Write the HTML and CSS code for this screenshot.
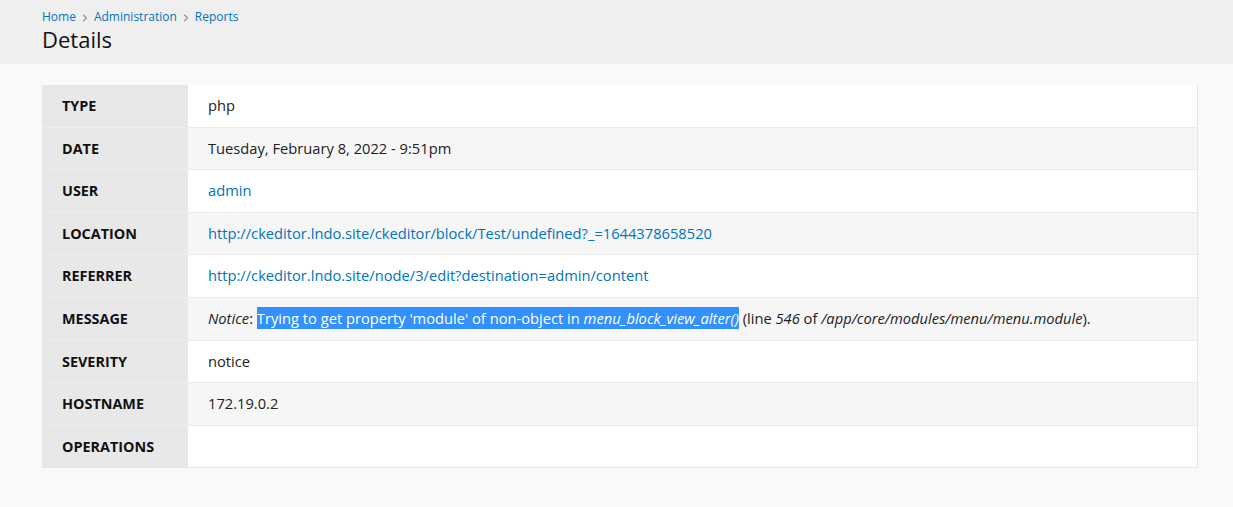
FILE: index.html
```html
<!DOCTYPE html>
<html lang="en">
<head>
<meta charset="utf-8">
<title>Details</title>
<link rel="stylesheet" href="styles.css">
</head>
<body>
<header class="page-header">
  <nav class="breadcrumb">
    <a href="#">Home</a>
    <svg class="sep" viewBox="0 0 6 8" width="6" height="8"><path d="M1.2 0.8 L4.4 4 L1.2 7.2" fill="none" stroke="#999" stroke-width="1.4"/></svg>
    <a href="#">Administration</a>
    <svg class="sep" viewBox="0 0 6 8" width="6" height="8"><path d="M1.2 0.8 L4.4 4 L1.2 7.2" fill="none" stroke="#999" stroke-width="1.4"/></svg>
    <a href="#">Reports</a>
  </nav>
  <h1 class="title">Details</h1>
</header>
<main class="content">
  <table class="details">
    <tbody>
      <tr class="odd"><th>Type</th><td>php</td></tr>
      <tr class="even"><th>Date</th><td>Tuesday, February 8, 2022 - 9:51pm</td></tr>
      <tr class="odd"><th>User</th><td><a href="#">admin</a></td></tr>
      <tr class="even"><th>Location</th><td><a href="#">http://ckeditor.lndo.site/ckeditor/block/Test/undefined?_=1644378658520</a></td></tr>
      <tr class="odd"><th>Referrer</th><td><a href="#">http://ckeditor.lndo.site/node/3/edit?destination=admin/content</a></td></tr>
      <tr class="even"><th>Message</th><td><em>Notice</em>: <span class="sel">Trying to get property 'module' of non-object in <em>menu_block_view_alter()</em></span> (line <em>546</em> of <em>/app/core/modules/menu/menu.module</em>).</td></tr>
      <tr class="odd"><th>Severity</th><td>notice</td></tr>
      <tr class="even"><th>Hostname</th><td>172.19.0.2</td></tr>
      <tr class="odd"><th>Operations</th><td></td></tr>
    </tbody>
  </table>
</main>
</body>
</html>
```

FILE: styles.css
```css
html, body {
  margin: 0;
  padding: 0;
}
body {
  background: #f9f9f9;
  font-family: "Open Sans", "Noto Sans", sans-serif;
  font-size: 14.7px;
  color: #222;
}
a {
  color: #0074bd;
  text-decoration: none;
}
.page-header {
  background: #efefef;
  padding: 8px 42px 11px;
  height: 45px;
}
.breadcrumb {
  display: flex;
  align-items: center;
  gap: 6px;
  font-size: 12px;
  line-height: 18px;
}
.breadcrumb .sep {
  display: block;
  margin-top: 1px;
}
.title {
  margin: 0;
  font-size: 22px;
  font-weight: 400;
  line-height: 26px;
  color: #111;
}
.content {
  padding: 21px 35px 30px 42px;
}
.details {
  width: 100%;
  border-collapse: collapse;
  background: #fff;
  border-right: 1px solid #e6e6e6;
}
.details th {
  width: 106px;
  background: #e8e8e8;
  text-align: left;
  text-transform: uppercase;
  font-weight: 700;
  font-size: 14.4px;
  color: #111;
  padding: 10px 20px;
  line-height: 21.6px;
  border-bottom: 1px solid #eeeeee;
}
.details td {
  padding: 10px 20px;
  line-height: 21.6px;
  border-bottom: 1px solid #ebebeb;
}
.details tr.even td {
  background: #f6f6f6;
}
.details tr:last-child th,
.details tr:last-child td {
  border-bottom: 1px solid #e6e6e6;
}
.sel {
  background: #3390ff;
  color: #fff;
  padding: 1px 0;
}
```
